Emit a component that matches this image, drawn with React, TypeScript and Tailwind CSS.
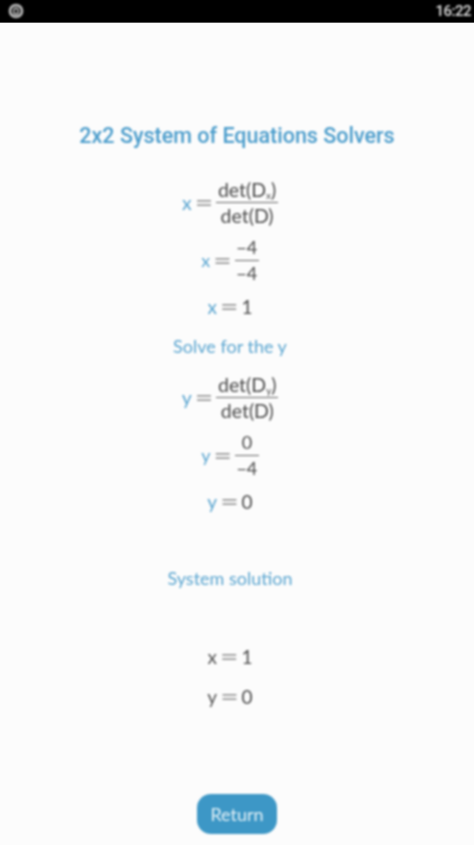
const eqFont = "font-['Lato','Open_Sans',sans-serif]";

function Lhs({ v, dark }: { v: string; dark?: boolean }) {
  return (
    <>
      <span className={dark ? "text-[#555]" : "text-[#5aa5d0]"}>{v}</span>
      <span className="text-[#999] mx-[3px] text-[22px] leading-none font-['DejaVu_Sans',sans-serif]">=</span>
    </>
  );
}

function Frac({ v, top, bottom, w, fs }: { v: string; top: React.ReactNode; bottom: React.ReactNode; w: string; fs: string }) {
  return (
    <div className={`flex items-center ${fs} ${eqFont}`}>
      <Lhs v={v} />
      <div className={`flex flex-col items-center text-[#4a4a4a] ${w}`}>
        <div className="leading-[25px] h-[25px] whitespace-nowrap">{top}</div>
        <div className="h-px w-full bg-[#666]" />
        <div className="leading-[25px] h-[25px] whitespace-nowrap">{bottom}</div>
      </div>
    </div>
  );
}

function Simple({ v, val, dark }: { v: string; val: string; dark?: boolean }) {
  return (
    <div className={`flex items-center h-[24px] text-[19px] ${eqFont}`}>
      <Lhs v={v} dark={dark} />
      <span className="text-[#4a4a4a]">{val}</span>
    </div>
  );
}

function Sub({ c }: { c: string }) {
  return <span className="text-[10px] align-[-2px]">{c}</span>;
}

export default function App() {
  return (
    <div className="w-[474px] h-[845px] bg-[#fcfcfc] flex flex-col overflow-hidden font-['Roboto',sans-serif]">
      <header className="h-[23px] bg-black border-b border-[#555] flex items-center justify-between pl-[8px] pr-[3px] shrink-0">
        <svg width="16" height="16" viewBox="0 0 15 15" className="blur-[0.8px]">
          <circle cx="7.5" cy="7.5" r="5.6" fill="none" stroke="#b8b8b8" strokeWidth="2.6" />
          <rect x="5.7" y="5" width="3.6" height="5.5" rx="1" fill="none" stroke="#eee" strokeWidth="1.2" />
        </svg>
        <span className="text-[#e0e0e0] text-[15px] font-medium tracking-[-0.5px] blur-[0.8px]">16:22</span>
      </header>

      <main className="flex-1 flex flex-col blur-[0.8px]">
        <h1 className="mt-[99px] h-[28px] leading-[28px] text-center text-[21.5px] font-medium text-[#4a9ccb] whitespace-nowrap">
          2x2 System of Equations Solvers
        </h1>

        <div className="w-[460px] flex flex-col items-center">
          <div className="mt-[27px]">
            <Frac v="x" fs="text-[19.5px]" w="w-[62px]" top={<>det(D<Sub c="x" />)</>} bottom="det(D)" />
          </div>
          <div className="mt-[7px]">
            <Frac v="x" fs="text-[18px]" w="w-[24px]" top="−4" bottom="−4" />
          </div>
          <div className="mt-[9px]">
            <Simple v="x" val="1" />
          </div>
          <p className={`mt-[15px] h-[24px] leading-[24px] text-[18px] text-[#5aa5d0] ${eqFont}`}>Solve for the y</p>
          <div className="mt-[14px]">
            <Frac v="y" fs="text-[19.5px]" w="w-[62px]" top={<>det(D<Sub c="y" />)</>} bottom="det(D)" />
          </div>
          <div className="mt-[7px]">
            <Frac v="y" fs="text-[18px]" w="w-[24px]" top="0" bottom="−4" />
          </div>
          <div className="mt-[9px]">
            <Simple v="y" val="0" />
          </div>
          <p className={`mt-[52px] h-[24px] leading-[24px] text-[18px] text-[#5aa5d0] ${eqFont}`}>System solution</p>
          <div className="mt-[55px]">
            <Simple v="x" val="1" dark />
          </div>
          <div className="mt-[16px]">
            <Simple v="y" val="0" dark />
          </div>
        </div>

        <div className="mt-[85px] flex justify-center">
          <button className={`w-[80px] h-[40px] rounded-[14px] bg-[#3d97c6] text-[#e4f1f7] text-[18px] ${eqFont}`}>
            Return
          </button>
        </div>
      </main>
    </div>
  );
}
